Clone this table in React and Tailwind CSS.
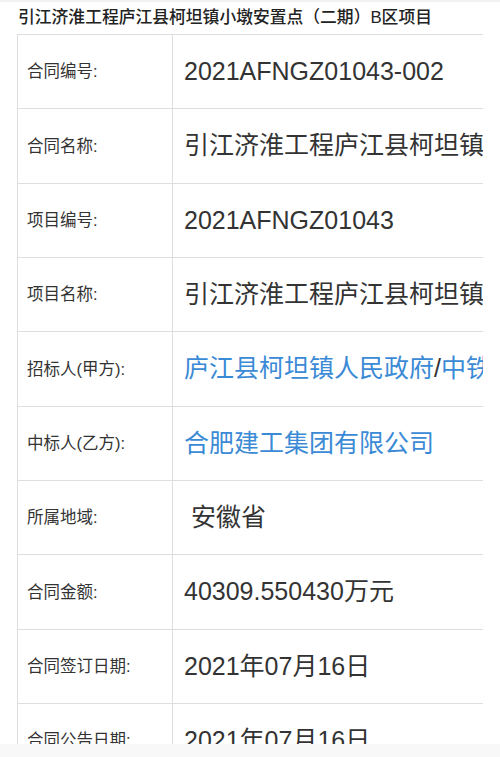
import React from 'react';

const TITLE = '引江济淮工程庐江县柯坦镇小墩安置点（二期）B区项目';

const ROWS = [
  { label: '合同编号:', value: '2021AFNGZ01043-002' },
  { label: '合同名称:', value: TITLE },
  { label: '项目编号:', value: '2021AFNGZ01043' },
  { label: '项目名称:', value: TITLE },
  {
    label: '招标人(甲方):',
    value: (
      <>
        <span className="text-[#3b8ad6]">庐江县柯坦镇人民政府</span>/<span className="text-[#3b8ad6]">中铁</span>
      </>
    ),
  },
  { label: '中标人(乙方):', value: <span className="text-[#3b8ad6]">合肥建工集团有限公司</span> },
  { label: '所属地域:', value: '\u00A0安徽省' },
  { label: '合同金额:', value: '40309.550430万元' },
  { label: '合同签订日期:', value: '2021年07月16日' },
  { label: '合同公告日期:', value: '2021年07月16日' },
];

export default function App() {
  return (
    <div className="relative h-[757px] overflow-hidden bg-white font-['Liberation_Sans','Noto_Sans_CJK_SC',sans-serif] text-[#333]">
      <div className="h-[2px] bg-[#f2f2f2]" />
      <h1 className="flex h-[32px] items-center pl-[18px] text-[16.8px] font-medium text-[#222]">{TITLE}</h1>

      <div className="ml-[17px] w-[466px] border-l border-[#dedede]">
        {ROWS.map(r => (
          <div key={r.label} className="flex h-[74.33px] border-t border-[#dedede]">
            <div className="flex w-[155px] shrink-0 items-center border-r border-[#dedede] pl-[9px] text-[16.5px] text-[#333]">
              {r.label}
            </div>
            <div className="flex min-w-0 flex-1 items-center overflow-hidden whitespace-nowrap pl-[11px] text-[25px] text-[#333]">
              {r.value}
            </div>
          </div>
        ))}
      </div>

      {/* bottom sheet edge covering the last row */}
      <div className="absolute inset-x-0 top-[744px] bottom-0 bg-[#f8f8f8]" />
    </div>
  );
}
